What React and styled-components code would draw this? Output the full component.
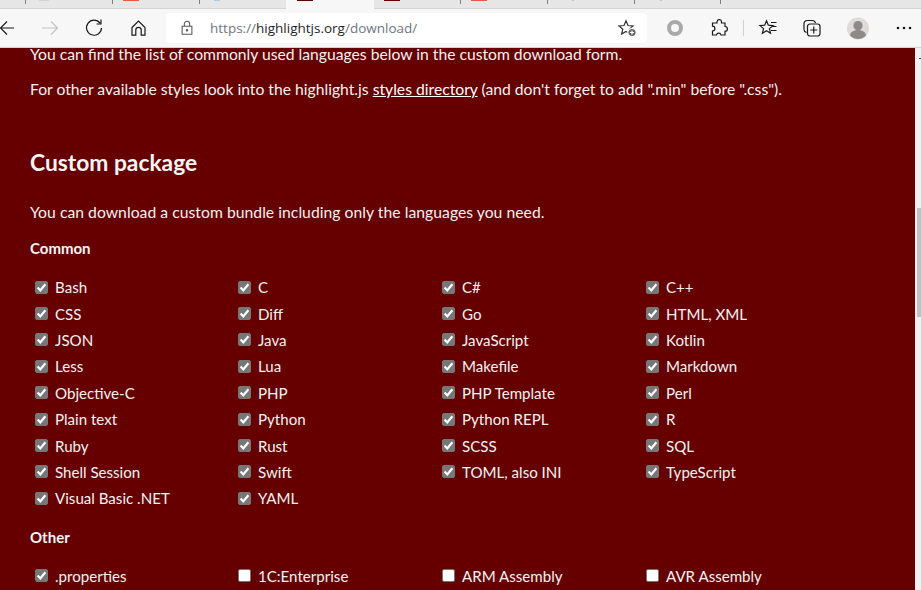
import React from "react";
import styled, { createGlobalStyle } from "styled-components";

const Global = createGlobalStyle`
  html, body { margin: 0; padding: 0; height: 100%; overflow: hidden; background: #660000; }
  #root { height: 100%; }
  * { box-sizing: border-box; }
`;

const Window = styled.div`
  width: 921px;
  height: 590px;
  display: flex;
  flex-direction: column;
  overflow: hidden;
`;

const TabStrip = styled.div`
  height: 9px;
  flex: none;
  display: flex;
  background: #e6e6e6;
  border-bottom: 1px solid #d4d4d4;
  padding-left: 25px;
`;

const Tab = styled.div`
  width: ${(p) => p.$width ?? 87}px;
  height: ${(p) => (p.$active ? 9 : 8)}px;
  flex: none;
  display: flex;
  align-items: flex-start;
  background: ${(p) => (p.$active ? "#f7f7f7" : "transparent")};
`;

const Separator = styled.div`
  width: 1px;
  height: 4px;
  flex: none;
  background: #808080;
`;

const Favicon = styled.div`
  width: ${(p) => p.$width ?? 16}px;
  height: 1px;
  flex: none;
  margin-left: ${(p) => p.$inset ?? 10}px;
  background: ${(p) => p.$color};
`;

const Toolbar = styled.div`
  height: 39px;
  flex: none;
  display: flex;
  align-items: center;
  background: #f7f7f7;
  border-bottom: 1px solid #d2d2d2;
`;

const ToolIcon = styled.svg`
  width: ${(p) => p.$size ?? 20}px;
  height: ${(p) => p.$size ?? 20}px;
  flex: none;
  fill: none;
  stroke: ${(p) => p.$color ?? "#1a1a1a"};
  stroke-width: 1.2;
`;

const NavGroup = styled.div`
  width: 171px;
  flex: none;
  display: flex;
  align-items: center;
  gap: 25px;
  margin-left: -5px;
`;

const Address = styled.div`
  width: 481px;
  height: 30px;
  flex: none;
  display: flex;
  align-items: center;
  justify-content: space-between;
  background: #ffffff;
  border-radius: 5px;
  padding: 0 10px 0 13px;
`;

const AddressLeft = styled.div`
  display: flex;
  align-items: center;
  gap: 15px;
`;

const Url = styled.span`
  font: 13.5px "Open Sans", "Noto Sans", sans-serif;
  color: #6f7680;
`;

const Host = styled.span`
  color: #1f1f1f;
`;

const Actions = styled.div`
  display: flex;
  align-items: center;
  margin-left: 18px;
  gap: 24px;
`;

const Divider = styled.div`
  width: 1px;
  height: 16px;
  flex: none;
  background: #d0d0d0;
  margin: 0 -10px;
`;

const Body = styled.div`
  flex: 1;
  min-height: 0;
  display: flex;
`;

const Page = styled.main`
  width: 915px;
  flex: none;
  background: #660000;
  color: #f2f2f2;
  padding: 0 0 0 30px;
  font-family: "Lato", "Open Sans", sans-serif;
  font-size: 15.7px;
  overflow: hidden;
`;

const Para = styled.p`
  margin: ${(p) => p.$top ?? 0}px 0 0;
  line-height: 20px;
  white-space: nowrap;
  letter-spacing: ${(p) => p.$spacing ?? 0}px;
`;

const StyleLink = styled.a`
  color: #ffffff;
  text-decoration: underline;
`;

const Heading = styled.h2`
  margin: 48px 0 0;
  font-size: 22.8px;
  line-height: 30px;
  font-weight: 700;
  color: #f5f5f5;
`;

const Group = styled.h4`
  margin: ${(p) => p.$top}px 0 0;
  font-size: 15px;
  line-height: 20px;
  font-weight: 700;
  color: #f5f5f5;
`;

const Grid = styled.div`
  display: grid;
  grid-template-columns: 203px 204px 204px 204px;
  grid-auto-rows: 26.4px;
  margin-top: ${(p) => p.$top}px;
`;

const Item = styled.label`
  display: flex;
  align-items: center;
  gap: 7px;
  white-space: nowrap;
  padding-left: 5px;
  font-size: 15.1px;
`;

const Check = styled.span`
  width: 13px;
  height: 13px;
  flex: none;
  display: flex;
  align-items: center;
  justify-content: center;
  border-radius: 2px;
  background: ${(p) => (p.$on ? "#777777" : "#ffffff")};
  border: 1px solid ${(p) => (p.$on ? "#777777" : "#767676")};
`;

const Rail = styled.div`
  width: 6px;
  flex: none;
  background: #f1f1f1;
  display: flex;
  flex-direction: column;
  align-items: flex-end;
`;

const RailArrow = styled.div`
  width: 2px;
  height: 1px;
  margin-top: 10px;
  background: #444444;
`;

const Thumb = styled.div`
  width: 4px;
  height: 109px;
  margin-top: 149px;
  background: #c1c1c1;
`;

const common = ["Bash","C","C#","C++","CSS","Diff","Go","HTML, XML","JSON","Java","JavaScript","Kotlin","Less","Lua","Makefile","Markdown","Objective-C","PHP","PHP Template","Perl","Plain text","Python","Python REPL","R","Ruby","Rust","SCSS","SQL","Shell Session","Swift","TOML, also INI","TypeScript","Visual Basic .NET","YAML"];
const other = [[".properties", true],["1C:Enterprise", false],["ARM Assembly", false],["AVR Assembly", false]];

function Box({ on }) {
  return (
    <Check $on={on}>
      {on && (
        <svg width="11" height="11" viewBox="0 0 11 11">
          <path d="M1.6 5.6 4.3 8.4 9.4 2.2" fill="none" stroke="#fff" strokeWidth="2.2" />
        </svg>
      )}
    </Check>
  );
}

export default function App() {
  return (
    <Window>
      <Global />
      <TabStrip>
        <Tab><Separator /><Favicon $color="#d2d2d2" $width={10} $inset={13} /></Tab>
        <Tab><Separator /><Favicon $color="#f1583a" /></Tab>
        <Tab><Separator /><Favicon $color="#9fd0ee" $width={6} $inset={14} /></Tab>
        <Tab $active $width={88}><Favicon $color="#660000" $inset={11} /></Tab>
        <Tab $width={86}><Favicon $color="#660000" /></Tab>
        <Tab><Separator /><Favicon $color="#f1583a" /></Tab>
        <Tab><Separator /><Favicon $color="#c4c4c4" $width={2} $inset={24} /></Tab>
        <Tab $width={86}><Separator /><Favicon $color="#c4c4c4" $width={2} $inset={25} /></Tab>
        <Tab><Separator /></Tab>
      </TabStrip>
      <Toolbar>
        <NavGroup>
          <ToolIcon viewBox="0 0 20 20"><path d="M19 10H5.500M12 3.500 5.500 10l6.500 6.500" /></ToolIcon>
          <ToolIcon viewBox="0 0 20 20" $color="#c4c4c4"><path d="M2 10h15.500M11 3.500l6.500 6.500-6.500 6.500" /></ToolIcon>
          <ToolIcon viewBox="0 0 20 20"><path d="M15 5.200A7.500 7.500 0 1 0 16.500 10M16 1.500v4.500h-4.500" /></ToolIcon>
          <ToolIcon viewBox="0 0 20 20"><path d="M2 9.500 8.500 3l6.500 6.500v7.700h-3.800V12a2.700 2.700 0 0 0-5.400 0v5.200H2z" /></ToolIcon>
        </NavGroup>
        <Address>
          <AddressLeft>
            <ToolIcon viewBox="0 0 16 18" $size={16} $color="#555"><path d="M2.500 7h11v9h-11zM5 7V4.500a3 3 0 0 1 6 0V7" /><circle cx="8" cy="11.500" r="0.800" fill="#555" /></ToolIcon>
            <Url>https://<Host>highlightjs.org</Host>/download/</Url>
          </AddressLeft>
          <ToolIcon viewBox="0 0 20 20" $color="#333"><path d="M9 2.800l2 4.700 5 .4-3.800 3.300 1.200 4.900L9 13.500l-4.400 2.600 1.200-4.900L2 7.900l5-.4z" /><circle cx="15" cy="14.500" r="4.200" fill="#666" stroke="#fff" /><path d="M15 12.500v4M13 14.500h4" stroke="#fff" /></ToolIcon>
        </Address>
        <Actions>
          <ToolIcon viewBox="0 0 20 20" $color="#a9a9a9"><circle cx="10" cy="10" r="6" strokeWidth="4" /></ToolIcon>
          <ToolIcon viewBox="0 0 20 20"><path d="M8 3.500a2.300 2.300 0 0 1 4.500 0V5h3.500v3.500a2.400 2.400 0 0 1 0 4.800V17h-4a2.300 2.300 0 0 0-4.500 0H3.500v-4a2.400 2.400 0 0 0 0-4.800V5H8z" /></ToolIcon>
          <Divider />
          <ToolIcon viewBox="0 0 20 20"><path d="M8.500 2.800l1.800 4.400 4.700.4-3.600 3 1.100 4.600-4-2.500-4.100 2.500 1.100-4.600-3.600-3 4.800-.4zM13 4.500h5.500M14 8.500h4.500M13 12.500h5.500" /></ToolIcon>
          <ToolIcon viewBox="0 0 20 20"><path d="M4.500 14.500C3 14 2 13 2 11.500V6c0-2 1.200-3.500 3.500-3.500h4.500c2 0 3.200 1 3.500 2.500" /><rect x="5.500" y="6" width="12.500" height="12" rx="2.500" /><path d="M11.750 8.500v7M8.250 12h7" /></ToolIcon>
          <svg width="24" height="23" viewBox="0 0 24 24">
            <circle cx="12" cy="12" r="11.500" fill="#dedbd8" />
            <circle cx="12" cy="9" r="4.800" fill="#8d8b89" />
            <path d="M3.500 19c1-4 4.500-5.500 8.500-5.500s7.500 1.500 8.500 5.500c-2 2.500-5 4-8.500 4s-6.500-1.500-8.500-4z" fill="#8d8b89" />
          </svg>
          <ToolIcon viewBox="0 0 20 20"><circle cx="4" cy="10" r="1.300" fill="#1a1a1a" stroke="none" /><circle cx="10" cy="10" r="1.300" fill="#1a1a1a" stroke="none" /><circle cx="16" cy="10" r="1.300" fill="#1a1a1a" stroke="none" /></ToolIcon>
        </Actions>
      </Toolbar>
      <Body>
        <Page>
          <Para $top={-4}>You can find the list of commonly used languages below in the custom download form.</Para>
          <Para $top={15}>For other available styles look into the highlight.js <StyleLink href="#">styles directory</StyleLink> (and don't forget to add ".min" before ".css").</Para>
          <Heading>Custom package</Heading>
          <Para $top={25} $spacing={0.04}>You can download a custom bundle including only the languages you need.</Para>
          <Group $top={16}>Common</Group>
          <Grid $top={16}>
            {common.map((n) => <Item key={n}><Box on />{n}</Item>)}
          </Grid>
          <Group $top={15}>Other</Group>
          <Grid $top={16}>
            {other.map(([n, on]) => <Item key={n}><Box on={on} />{n}</Item>)}
          </Grid>
        </Page>
        <Rail><RailArrow /><Thumb /></Rail>
      </Body>
    </Window>
  );
}
